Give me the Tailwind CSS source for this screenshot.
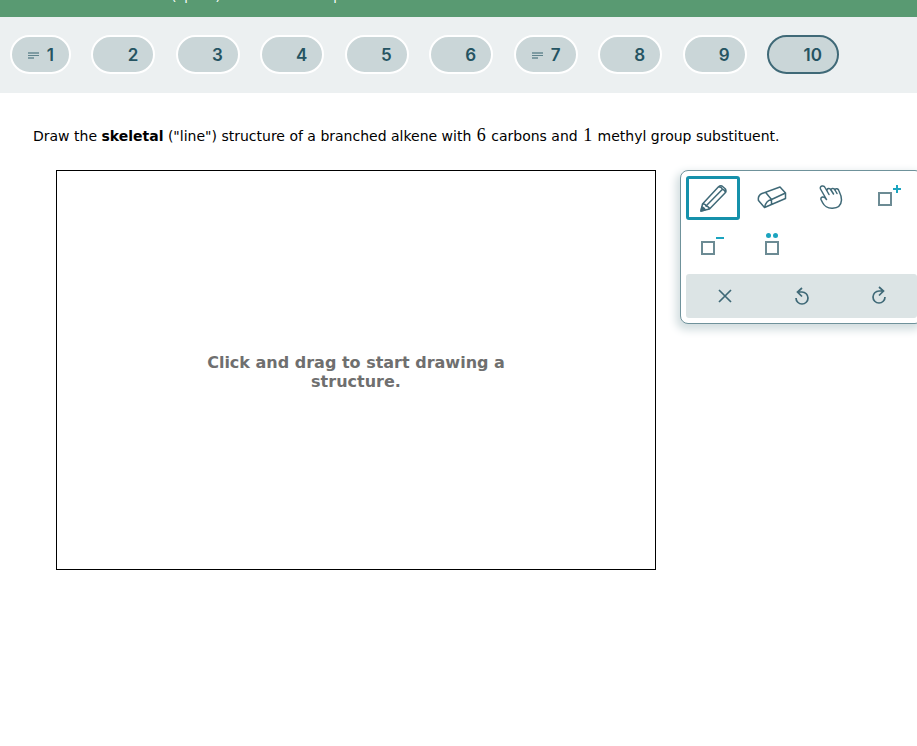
<!DOCTYPE html>
<html lang="en">
<head>
<meta charset="utf-8">
<meta name="viewport" content="width=device-width, initial-scale=1">
<title>Question 10</title>
<script src="https://cdn.jsdelivr.net/npm/@tailwindcss/browser@4"></script>
</head>
<body class="min-h-screen overflow-x-hidden bg-white text-black font-['DejaVu_Sans',sans-serif]">
<header class="flex h-[17px] items-end overflow-hidden bg-[#599a72] pb-[13px] pl-16 text-white">
  <span class="whitespace-nowrap font-['Open_Sans',sans-serif] text-sm leading-5">Lesson Thirteen (opens) Alkenes and use pt. 2</span>
</header>

<nav aria-label="Questions" class="bg-[#ecf0f1] pt-[18px] pr-[78px] pb-[19px] pl-[10px]">
  <div class="flex justify-between font-[Inter,sans-serif] text-[17px] font-semibold leading-5 text-[#255462]">
    <button class="flex h-[39px] w-[61px] items-center justify-between rounded-full border-2 border-white bg-[#cad6d8] pt-px pr-[15px] pl-4"><svg class="h-[7px] w-[11px]" viewBox="0 0 11 7" fill="#7f9ca3" shape-rendering="crispEdges" aria-label="Answered"><path d="M0 0h11v2H0zM0 5h6v2H0z"/><path d="M0 3h11v1H0z" fill="#5f838c"/></svg>1</button>
    <button class="flex h-[39px] w-16 items-center justify-end rounded-full border-2 border-white bg-[#cad6d8] pt-px pr-[15px]">2</button>
    <button class="flex h-[39px] w-16 items-center justify-end rounded-full border-2 border-white bg-[#cad6d8] pt-px pr-[15px]">3</button>
    <button class="flex h-[39px] w-16 items-center justify-end rounded-full border-2 border-white bg-[#cad6d8] pt-px pr-[15px]">4</button>
    <button class="flex h-[39px] w-16 items-center justify-end rounded-full border-2 border-white bg-[#cad6d8] pt-px pr-[15px]">5</button>
    <button class="flex h-[39px] w-16 items-center justify-end rounded-full border-2 border-white bg-[#cad6d8] pt-px pr-[15px]">6</button>
    <button class="flex h-[39px] w-16 items-center justify-between rounded-full border-2 border-white bg-[#cad6d8] pt-px pr-[15px] pl-4"><svg class="h-[7px] w-[11px]" viewBox="0 0 11 7" fill="#7f9ca3" shape-rendering="crispEdges" aria-label="Answered"><path d="M0 0h11v2H0zM0 5h6v2H0z"/><path d="M0 3h11v1H0z" fill="#5f838c"/></svg>7</button>
    <button class="flex h-[39px] w-16 items-center justify-end rounded-full border-2 border-white bg-[#cad6d8] pt-px pr-[15px]">8</button>
    <button class="flex h-[39px] w-16 items-center justify-end rounded-full border-2 border-white bg-[#cad6d8] pt-px pr-[15px]">9</button>
    <button aria-current="true" class="flex h-[39px] w-[72px] items-center justify-end rounded-full border-2 border-[#3f6977] bg-[#cad6d8] pt-px pr-[15px]">10</button>
  </div>
</nav>

<main class="pt-8 pl-[33px]">
  <p class="text-sm leading-[22px]">Draw the <strong>skeletal</strong> ("line") structure of a branched alkene with <span class="mx-px font-['Liberation_Serif',serif] text-lg leading-5">6</span> carbons and <span class="mx-px font-['Liberation_Serif',serif] text-lg leading-5">1</span> methyl group substituent.</p>

  <div class="mt-[23px] ml-[23px] flex items-start gap-6">
    <section aria-label="Drawing area" class="flex h-[400px] w-[600px] shrink-0 items-center justify-center border border-black px-[140px] pt-1">
      <p class="text-center text-base font-bold leading-[19px] text-[#6f6f6f]">Click and drag to start drawing a structure.</p>
    </section>

    <section aria-label="Drawing tools" class="-mr-[6px] min-w-[243px] flex-1 rounded-lg border border-[#6f929b] bg-white p-[5px] shadow-[-2px_4px_8px_2px_#d3dee0]">
      <div class="grid grid-cols-4 gap-x-[5px] gap-y-[5px]">
        <button aria-label="Pencil" class="flex h-11 items-center justify-center rounded-[3px] border-3 border-[#1591ab]">
          <svg class="h-7 w-7" viewBox="0 0 28 28" fill="none" stroke="#3f6977" stroke-width="1.5" stroke-linejoin="round" stroke-linecap="round"><path d="M2 27 3.500 20 19.500 2.800Q21 1.500 23 2L26.500 5Q27.500 7 26.500 8.500L10.500 25ZM3.500 20Q6.500 19.500 7 22 10 22.500 10.500 25M7 22 23.500 5.300M19.500 2.800Q22.500 3 23.500 5.300 26 6 26.500 8.500"/><path d="m2 27 .8-4Q5.500 23.500 6 26Z" fill="#3f6977"/></svg>
        </button>
        <button aria-label="Eraser" class="flex h-11 items-center justify-center pb-[2px]">
          <svg class="h-6 w-[30px]" viewBox="0 0 30 24" fill="none" stroke="#3f6977" stroke-width="1.500" stroke-linejoin="round"><path d="M5 8.500 23 2 28.500 8v5.500L7.500 22.500 1.500 15.500Q.5 10.500 5 8.500ZM8.500 7.300 14.500 14.500 28.500 8M14.500 14.500V19.500M14.500 14.500Q9 15.500 7.500 22.500"/></svg>
        </button>
        <button aria-label="Drag" class="flex h-11 items-center justify-center pb-[2px]">
          <svg class="h-6 w-6" viewBox="0 0 24 24" fill="none" stroke="#3f6977" stroke-width="1.500" stroke-linejoin="round" stroke-linecap="round"><path d="M7.500 14.500 1.500 4Q.8 1.500 3 1T6 2.500L10 9.500M8 6Q7.700 3.800 9.500 3.600T12 5L14.500 9M12 5.500Q12 3.300 13.800 3.400T16 5L18 8.500M16 5.200Q16.500 3.300 18 3.800T19.800 5.500Q22.500 11 22.500 15 22 23 13.500 23.200 6.500 23.500 3.500 17.500L2 14.500Q1.500 12.500 3.500 12T7.500 14.500"/></svg>
        </button>
        <button aria-label="Positive charge" class="flex h-11 items-center justify-center pb-[6px]">
          <svg class="h-6 w-6" viewBox="0 0 24 24" fill="none"><path d="M1 10h12v12H1z" stroke="#6c8b94" stroke-width="2"/><path d="M19 2v8M15 6h8" stroke="#1ba4bf" stroke-width="2"/></svg>
        </button>
        <button aria-label="Negative charge" class="flex h-11 items-center justify-center pb-[6px]">
          <svg class="h-6 w-6" viewBox="0 0 24 24" fill="none"><path d="M1 10h12v12H1z" stroke="#6c8b94" stroke-width="2"/><path d="M15 6h8" stroke="#1ba4bf" stroke-width="2"/></svg>
        </button>
        <button aria-label="Lone pair" class="flex h-11 items-center justify-center pb-[6px]">
          <svg class="h-6 w-[14px]" viewBox="0 0 14 24" fill="none"><path d="M1 10h12v12H1z" stroke="#6c8b94" stroke-width="2"/><circle cx="3.500" cy="3.500" r="2.500" fill="#1ba4bf"/><circle cx="10.500" cy="3.500" r="2.500" fill="#1ba4bf"/></svg>
        </button>
      </div>
      <div class="mt-[5px] grid h-11 grid-cols-3 rounded-[3px] bg-[#dce4e5]">
        <button aria-label="Clear" class="flex items-center justify-center"><svg class="h-[14px] w-[14px]" viewBox="0 0 14 14" fill="none" stroke="#3f6977" stroke-width="1.700"><path d="m1 1 12 12M13 1 1 13"/></svg></button>
        <button aria-label="Undo" class="flex items-center justify-center"><svg class="h-[18px] w-[14px]" viewBox="0 0 14 18" fill="none" stroke="#3f6977" stroke-width="1.700"><path d="M1 11a6 6 0 1 0 6-6H2.500M7 1 2.500 5 7 9.500"/></svg></button>
        <button aria-label="Redo" class="flex items-center justify-center pb-[2px]"><svg class="h-[18px] w-[14px]" viewBox="0 0 14 18" fill="none" stroke="#3f6977" stroke-width="1.700"><path d="M13 11a6 6 0 1 1-6-6h4.500M7 1l4.500 4L7 9.500"/></svg></button>
      </div>
    </section>
  </div>
</main>
</body>
</html>
